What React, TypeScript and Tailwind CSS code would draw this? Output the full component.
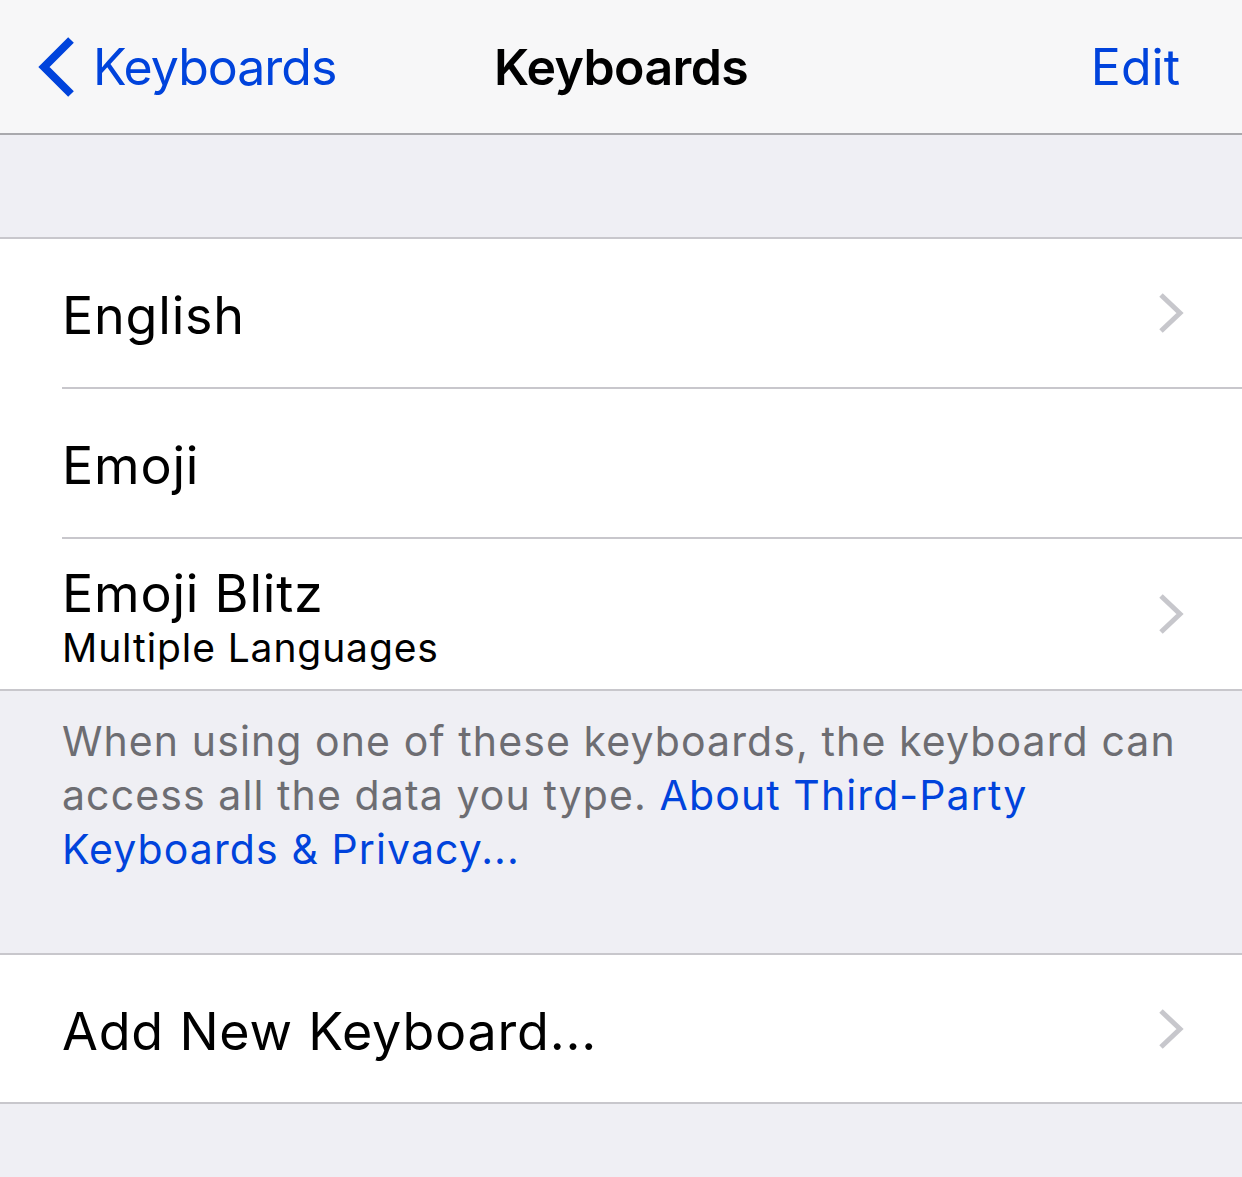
const font = { fontFamily: "Inter, 'Noto Sans', sans-serif" };

const Chevron = () => (
  <svg width="26" height="42" viewBox="0 0 26 42" className="shrink-0">
    <path d="M3 3 L22 21 L3 39" fill="none" stroke="#c7c7cc" strokeWidth="5" />
  </svg>
);

const Row = ({
  title,
  subtitle,
  chevron,
  last,
  short,
}: {
  title: string;
  subtitle?: string;
  chevron?: boolean;
  last?: boolean;
  short?: boolean;
}) => (
  <div className={`flex pl-[62px] ${short ? "h-[147px]" : "h-[150px]"}`}>
    <div
      className={`flex flex-1 items-center justify-between pr-[58px] ${
        last ? "" : "border-b-2 border-[#c8c7cc]"
      }`}
    >
      <div className="flex flex-col pt-[6px]">
        <span className="text-[52px] leading-[60px] tracking-[0.8px] text-black">{title}</span>
        {subtitle && (
          <span className="mt-[1px] text-[39px] leading-[46px] tracking-[0.9px] text-black">{subtitle}</span>
        )}
      </div>
      {chevron && <Chevron />}
    </div>
  </div>
);

export default function App() {
  return (
    <div className="w-[1242px] h-[1177px] bg-[#efeff4] overflow-hidden" style={font}>
      <div className="relative flex h-[135px] items-center bg-[#f7f7f8] border-b-2 border-[#a9a9ad]">
        <div className="flex items-center pl-[36px] gap-[17px] text-[#0043dc]">
          <svg width="40" height="64" viewBox="0 0 40 64">
            <path d="M35 5 L8 32 L35 59" fill="none" stroke="#0043dc" strokeWidth="8" />
          </svg>
          <span className="text-[50px] tracking-[-1px] leading-none">Keyboards</span>
        </div>
        <div className="absolute left-0 right-0 text-center text-[50px] font-semibold tracking-[-0.6px] leading-none text-black pointer-events-none">
          Keyboards
        </div>
        <span className="ml-auto pr-[62px] text-[50px] tracking-[0px] leading-none text-[#0043dc]">Edit</span>
      </div>

      <div className="h-[104px] border-b-2 border-[#c8c7cc]" />

      <div className="bg-white">
        <Row title="English" chevron />
        <Row title="Emoji" />
        <Row title="Emoji Blitz" subtitle="Multiple Languages" chevron last />
      </div>

      <div className="border-t-2 border-[#c8c7cc] h-[264px] pl-[62px] pr-[50px] pt-[23px] text-[41px] leading-[54px] tracking-[1.1px] text-[#6d6d72]">
        When using one of these keyboards, the keyboard can access all the data you type.{" "}
        <span className="text-[#0043dc]">About Third-Party Keyboards &amp; Privacy...</span>
      </div>

      <div className="bg-white border-t-2 border-b-2 border-[#c8c7cc]">
        <Row title="Add New Keyboard..." chevron last short />
      </div>
    </div>
  );
}
